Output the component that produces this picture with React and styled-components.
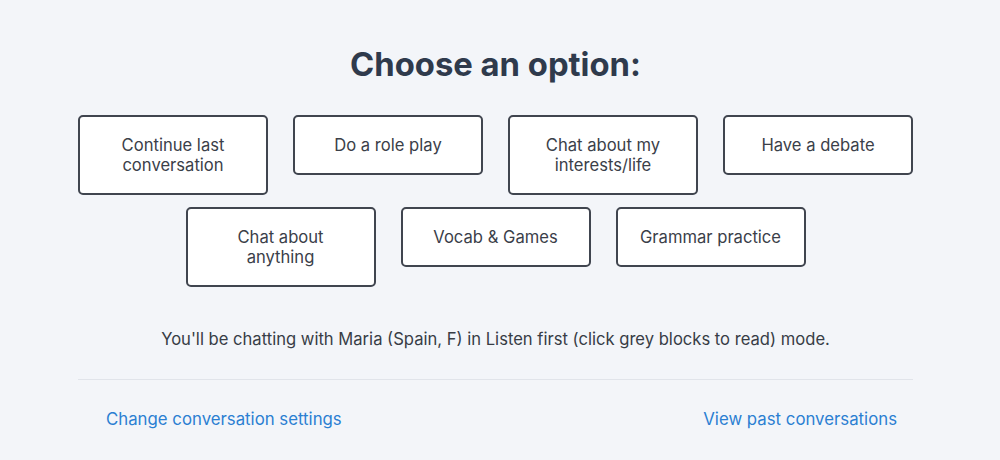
import React from "react";
import styled, { createGlobalStyle } from "styled-components";

const Global = createGlobalStyle`
  html, body { margin: 0; padding: 0; background: #f3f5f9; }
  body { font-family: Inter, "Noto Sans", sans-serif; }
`;

const Page = styled.div`
  width: 835px;
  margin-left: 78px;
  padding-top: 44px;
  display: flex;
  flex-direction: column;
  align-items: center;
`;

const Title = styled.h1`
  margin: 0;
  font-size: 32.8px;
  line-height: 40px;
  font-weight: 700;
  color: #2f3a4c;
`;

const Options = styled.div`
  margin-top: 31px;
  display: flex;
  flex-wrap: wrap;
  justify-content: center;
  align-items: flex-start;
  gap: 12px 25px;
`;

const Option = styled.button`
  box-sizing: border-box;
  width: 190px;
  padding: 18px 20px;
  background: #ffffff;
  border: 2px solid #40454f;
  border-radius: 5px;
  font-family: inherit;
  font-size: 16.6px;
  line-height: 20px;
  color: #3b4049;
  text-align: center;
  cursor: pointer;
`;

const Info = styled.p`
  margin: 40px 0 0;
  font-size: 16.6px;
  line-height: 24px;
  color: #383d46;
`;

const Divider = styled.hr`
  align-self: stretch;
  margin: 28px 0 0;
  border: none;
  border-top: 1px solid #e1e4ea;
`;

const Footer = styled.div`
  align-self: stretch;
  display: flex;
  justify-content: space-between;
  padding: 27px 16px 0 28px;
`;

const LinkButton = styled.a`
  font-size: 16.8px;
  line-height: 24px;
  color: #2b7fd2;
  text-decoration: none;
  cursor: pointer;
`;

const options = [
  "Continue last conversation",
  "Do a role play",
  "Chat about my interests/life",
  "Have a debate",
  "Chat about anything",
  "Vocab & Games",
  "Grammar practice",
];

export default function App() {
  return (
    <>
      <Global />
      <Page>
        <Title>Choose an option:</Title>
        <Options>
          {options.map((o) => (
            <Option key={o}>{o}</Option>
          ))}
        </Options>
        <Info>
          You'll be chatting with Maria (Spain, F) in Listen first (click grey blocks to read) mode.
        </Info>
        <Divider />
        <Footer>
          <LinkButton>Change conversation settings</LinkButton>
          <LinkButton>View past conversations</LinkButton>
        </Footer>
      </Page>
    </>
  );
}
